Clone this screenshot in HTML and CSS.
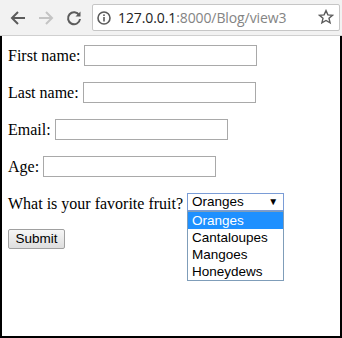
FILE: index.html
```html
<!DOCTYPE html>
<html>
<head>
<meta charset="utf-8">
<link rel="stylesheet" href="styles.css">
</head>
<body>
<div class="browser">
  <div class="toolbar">
    <div class="nav">
      <svg class="navicon" width="18" height="18" viewBox="0 0 18 18"><path d="M16 9H3M9 3L3 9l6 6" fill="none" stroke="#5b5b5b" stroke-width="2"/></svg>
      <svg class="navicon" width="18" height="18" viewBox="0 0 18 18"><path d="M2 9h13M9 3l6 6-6 6" fill="none" stroke="#c4c4c4" stroke-width="2"/></svg>
      <svg class="navicon" width="18" height="18" viewBox="0 0 18 18"><path d="M14.2 6.2A6 6 0 1 0 15 10" fill="none" stroke="#5b5b5b" stroke-width="2"/><path d="M15.5 2.5v5h-5z" fill="#5b5b5b"/></svg>
    </div>
    <div class="omnibox">
      <svg class="info" width="14" height="14" viewBox="0 0 14 14"><circle cx="7" cy="7" r="6" fill="none" stroke="#5b5b5b" stroke-width="1.6"/><rect x="6.2" y="6" width="1.6" height="4.5" fill="#5b5b5b"/><rect x="6.2" y="3.4" width="1.6" height="1.6" fill="#5b5b5b"/></svg>
      <span class="url"><span class="host">127.0.0.1</span><span class="rest">:8000/Blog/view3</span></span>
      <svg class="star" width="16" height="16" viewBox="0 0 16 16"><path d="M8 1.6l1.9 4.3 4.6.4-3.5 3 1.1 4.6L8 11.5l-4.1 2.4 1.1-4.6-3.5-3 4.6-.4z" fill="none" stroke="#5b5b5b" stroke-width="1.4" stroke-linejoin="miter"/></svg>
    </div>
  </div>
  <div class="page">
    <div class="row">First name:<span class="field"></span></div>
    <div class="row">Last name:<span class="field"></span></div>
    <div class="row">Email:<span class="field"></span></div>
    <div class="row">Age:<span class="field"></span></div>
    <div class="row">What is your favorite fruit?<span class="select"><span class="seltext">Oranges</span><span class="arrow">▼</span><span class="list"><span class="opt sel">Oranges</span><span class="opt">Cantaloupes</span><span class="opt">Mangoes</span><span class="opt">Honeydews</span></span></span></div>
    <div class="row"><span class="button">Submit</span></div>
  </div>
</div>
</body>
</html>
```
FILE: styles.css
```css
html, body { margin: 0; padding: 0; background: #fff; }
.browser { width: 342px; height: 338px; display: flex; flex-direction: column; }
.toolbar {
  height: 35px; background: #f2f2f2; border-bottom: 1px solid #d0d0d0;
  display: flex; align-items: center; box-sizing: content-box;
}
.nav { display: flex; gap: 10px; padding-left: 9px; width: 74px; }
.navicon { display: block; }
.omnibox {
  margin-left: 9px; width: 246px; height: 25px; background: #fff;
  border: 1px solid #c6c6c6; border-radius: 2px;
  display: flex; align-items: center; position: relative;
}
.info { margin-left: 4px; margin-right: 7px; }
.url { font-family: "Open Sans", sans-serif; font-size: 14px; letter-spacing: -0.1px; color: #222; }
.rest { color: #848484; }
.star { position: absolute; right: 5px; top: 4px; }
.page {
  flex: 1; border: 2px solid #000; border-top: none;
  padding: 9px 6px 8px; font-family: "Liberation Serif", serif; font-size: 16px; color: #000;
}
.row { height: 21px; line-height: 21px; margin-bottom: 16px; display: flex; align-items: center; white-space: nowrap; }
.field { display: inline-block; height: 21px; box-sizing: border-box; width: 173px; border: 1px solid #a9a9a9; margin-left: 4px; }
.select {
  position: relative; display: inline-flex; align-items: center; margin-left: 4px; align-self: flex-start;
  width: 97px; height: 18px; box-sizing: border-box; border: 1px solid #7a9cd6;
  font-family: "Liberation Sans", sans-serif; font-size: 13.5px; line-height: 16px;
  padding-left: 4px;
}
.seltext { flex: 1; }
.arrow { font-size: 10px; margin-right: 5px; }
.list {
  position: absolute; left: -1px; top: 17px; width: 97px; box-sizing: border-box;
  border: 1px solid #7f9db9; background: #fff; display: flex; flex-direction: column;
}
.opt { height: 17px; line-height: 17px; padding-left: 4px; font-size: 13.5px; }
.opt.sel { background: #1e90ff; color: #fff; }
.button {
  display: inline-block; width: 57px; height: 20px; box-sizing: border-box; margin-top: -1px; align-self: flex-start;
  border: 1px solid #a0a0a0; border-radius: 2px;
  background: linear-gradient(#f6f6f6, #dedede);
  font-family: "Liberation Sans", sans-serif; font-size: 13.5px; line-height: 18px; text-align: center;
}
```
